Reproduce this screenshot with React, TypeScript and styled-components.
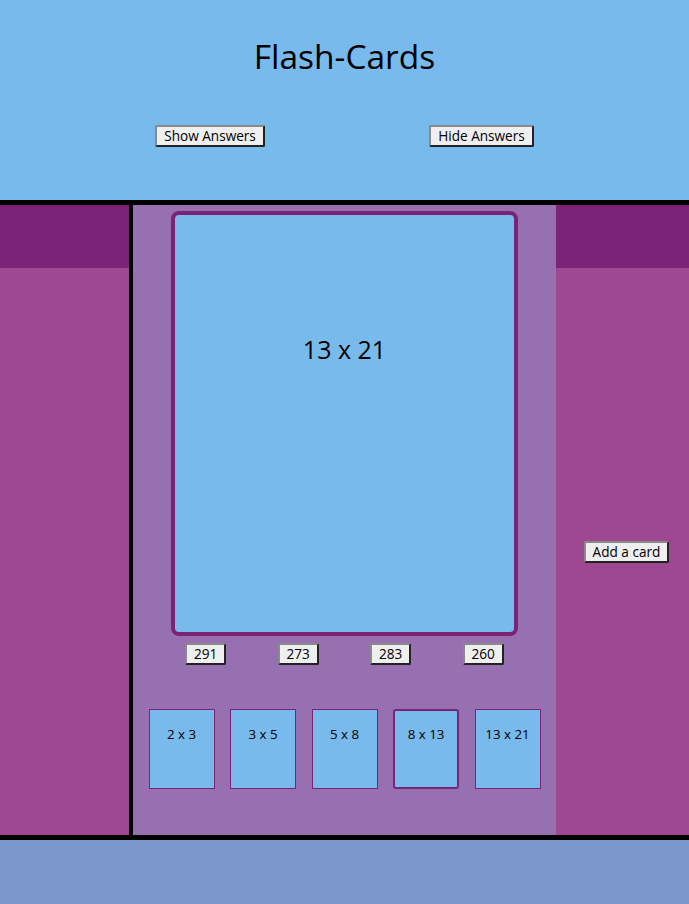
import React from 'react'
import styled, { createGlobalStyle } from 'styled-components'

const GlobalStyle = createGlobalStyle`
  body {
    margin: 0;
    font-family: "Open Sans", "DejaVu Sans", sans-serif;
  }
`

const sizes = ['2 x 3', '3 x 5', '5 x 8', '8 x 13', '13 x 21']
const scores = [291, 273, 283, 260]

export default function App() {
  return (
    <>
      <GlobalStyle />
      <Page>
        <Header>
          <Title>Flash-Cards</Title>
          <Controls>
            <Button>Show Answers</Button>
            <Button>Hide Answers</Button>
          </Controls>
        </Header>
        <Main>
          <Aside $left>
            <AsideTop />
            <AsideBody />
          </Aside>
          <Center>
            <Card>
              <CardText>13 x 21</CardText>
            </Card>
            <Scores>
              {scores.map((s) => (
                <Button key={s}>{s}</Button>
              ))}
            </Scores>
            <Thumbs>
              {sizes.map((s) => (
                <Thumb key={s} $active={s === '8 x 13'}>
                  {s}
                </Thumb>
              ))}
            </Thumbs>
          </Center>
          <Aside>
            <AsideTop />
            <AsideBody>
              <Button>Add a card</Button>
            </AsideBody>
          </Aside>
        </Main>
        <Footer />
      </Page>
    </>
  )
}

const Page = styled.div`
  width: 689px;
  display: flex;
  flex-direction: column;
`
const Header = styled.header`
  height: 200px;
  background: #79baec;
  border-bottom: 5px solid #000;
  display: flex;
  flex-direction: column;
  align-items: center;
`
const Title = styled.h1`
  margin: 33px 0 0;
  font-size: 33.5px;
  font-weight: 400;
  line-height: 46px;
  color: #000;
`
const Controls = styled.div`
  align-self: stretch;
  margin: 46px 73px 0;
  display: flex;
  justify-content: space-around;
`
const Button = styled.button`
  font-family: inherit;
  font-size: 13.6px;
  line-height: 16px;
  padding: 1px 7px;
  color: #000;
  background: #efefef;
  border: 2px solid;
  border-color: #8a8a8a #222 #222 #8a8a8a;
  border-radius: 2px;
`
const Main = styled.main`
  height: 630px;
  display: flex;
`
const Aside = styled.aside<{ $left?: boolean }>`
  flex: ${(p) => (p.$left ? '0 0 129px' : '1')};
  display: flex;
  flex-direction: column;
  border-right: ${(p) => (p.$left ? '4px solid #000' : 'none')};
`
const AsideTop = styled.div`
  height: 63px;
  background: #7b2377;
`
const AsideBody = styled.div`
  flex: 1;
  background: #9e4892;
  display: flex;
  align-items: center;
  justify-content: center;
  padding-left: 8px;
`
const Center = styled.section`
  width: 423px;
  background: #9670b0;
  display: flex;
  flex-direction: column;
  align-items: center;
  padding-top: 6px;
  box-sizing: border-box;
`
const Card = styled.div`
  width: 347px;
  height: 425px;
  box-sizing: border-box;
  background: #79baec;
  border: 4px solid #7b2377;
  border-radius: 8px;
  display: flex;
  justify-content: center;
  padding-top: 117px;
`
const CardText = styled.span`
  font-size: 25px;
  line-height: 34px;
  color: #000;
`
const Scores = styled.div`
  margin-top: 7px;
  display: grid;
  grid-template-columns: repeat(4, 92.5px);
  justify-items: center;
`
const Thumbs = styled.div`
  margin-top: 44px;
  display: flex;
  gap: 15.5px;
`
const Thumb = styled.div<{ $active?: boolean }>`
  width: 66px;
  height: 80px;
  box-sizing: border-box;
  background: #79baec;
  border: ${(p) => (p.$active ? '2px' : '1px')} solid #7b2377;
  border-radius: ${(p) => (p.$active ? '3px' : '0')};
  padding-top: ${(p) => (p.$active ? '15px' : '16px')};
  text-align: center;
  font-size: 13.3px;
  line-height: 16px;
  color: #000;
`
const Footer = styled.footer`
  height: 64px;
  background: #7b97cc;
  border-top: 5px solid #000;
`
